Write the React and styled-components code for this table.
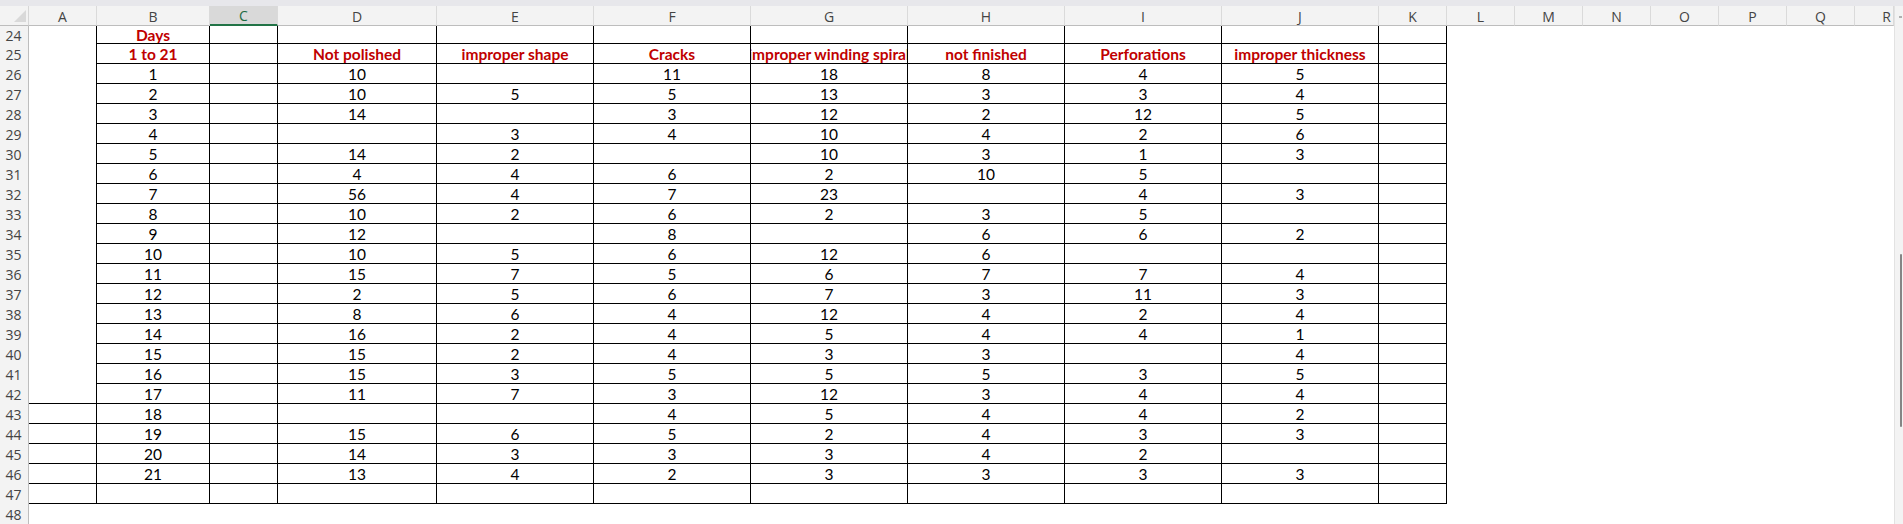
import React from "react";
import styled, { createGlobalStyle } from "styled-components";

const GlobalStyle = createGlobalStyle`
  html, body { margin: 0; padding: 0; background: #ffffff; }
  body { font-family: Lato, "Noto Sans", sans-serif; }
`;

const COLS = [
  { key: "A", w: 68 },
  { key: "B", w: 113 },
  { key: "C", w: 68 },
  { key: "D", w: 159 },
  { key: "E", w: 157 },
  { key: "F", w: 157 },
  { key: "G", w: 157 },
  { key: "H", w: 157 },
  { key: "I", w: 157 },
  { key: "J", w: 157 },
  { key: "K", w: 68 },
  { key: "L", w: 68 },
  { key: "M", w: 68 },
  { key: "N", w: 68 },
  { key: "O", w: 68 },
  { key: "P", w: 68 },
  { key: "Q", w: 68 },
  { key: "R", w: 39 },
];

const HEADERS = ["Not polished", "improper shape", "Cracks", "improper winding spiral", "not finished", "Perforations", "improper thickness"];

const DATA = [
  [10, "", 11, 18, 8, 4, 5],
  [10, 5, 5, 13, 3, 3, 4],
  [14, "", 3, 12, 2, 12, 5],
  ["", 3, 4, 10, 4, 2, 6],
  [14, 2, "", 10, 3, 1, 3],
  [4, 4, 6, 2, 10, 5, ""],
  [56, 4, 7, 23, "", 4, 3],
  [10, 2, 6, 2, 3, 5, ""],
  [12, "", 8, "", 6, 6, 2],
  [10, 5, 6, 12, 6, "", ""],
  [15, 7, 5, 6, 7, 7, 4],
  [2, 5, 6, 7, 3, 11, 3],
  [8, 6, 4, 12, 4, 2, 4],
  [16, 2, 4, 5, 4, 4, 1],
  [15, 2, 4, 3, 3, "", 4],
  [15, 3, 5, 5, 5, 3, 5],
  [11, 7, 3, 12, 3, 4, 4],
  ["", "", 4, 5, 4, 4, 2],
  [15, 6, 5, 2, 4, 3, 3],
  [14, 3, 3, 3, 4, 2, ""],
  [13, 4, 2, 3, 3, 3, 3],
];

const Page = styled.div`
  width: 1903px;
  height: 524px;
  display: flex;
  flex-direction: column;
  overflow: hidden;
  background: #ffffff;
`;

const TopStrip = styled.div`
  height: 6px;
  flex: none;
  background: #e7e7eb;
`;

const Body = styled.div`
  flex: 1;
  display: flex;
  min-height: 0;
`;

const Sheet = styled.div`
  width: 1894px;
  display: grid;
  grid-template-columns: 29px ${COLS.map((c) => c.w + "px").join(" ")};
  grid-template-rows: 20px 18px repeat(23, 20px) 20px;
  overflow: hidden;
`;

const Corner = styled.div`
  background: #f3f3f3;
  border-right: 1px solid #d6d6d6;
  border-bottom: 1px solid #bdbdbd;
  box-sizing: border-box;
  display: flex;
  align-items: flex-end;
  justify-content: flex-end;
  padding: 0 2px 3px 0;
`;

const ColHeader = styled.div`
  box-sizing: border-box;
  background: ${(p) => (p.$active ? "#d9d9d9" : "#f3f3f3")};
  border-right: 1px solid #dadada;
  border-bottom: ${(p) => (p.$active ? "2px solid #217346" : "1px solid #bdbdbd")};
  color: ${(p) => (p.$active ? "#1d6b43" : "#444444")};
  font-family: "Open Sans", "Noto Sans", sans-serif;
  font-size: 14px;
  display: flex;
  align-items: center;
  justify-content: ${(p) => (p.$end ? "flex-end" : "center")};
  padding-right: ${(p) => (p.$end ? "2px" : "0")};
  padding-top: 1px;
  overflow: hidden;
`;

const RowHeader = styled.div`
  box-sizing: border-box;
  background: #f3f3f3;
  border-right: 1px solid #bdbdbd;
  color: #444444;
  font-family: "Open Sans", "Noto Sans", sans-serif;
  font-size: 14px;
  display: flex;
  align-items: center;
  justify-content: center;
  padding-right: 1px;
`;

const Cell = styled.div`
  box-sizing: border-box;
  border-right: ${(p) => (p.$right ? "1px solid #000000" : "none")};
  border-bottom: ${(p) => (p.$bottom ? "1px solid #000000" : "none")};
  display: flex;
  align-items: center;
  justify-content: center;
  overflow: hidden;
  white-space: nowrap;
  font-family: Lato, "Noto Sans", sans-serif;
  font-size: 15.5px;
  font-weight: ${(p) => (p.$head ? 700 : 400)};
  color: ${(p) => (p.$head ? "#c00000" : "#000000")};
  padding-top: 1px;
`;

const CellText = styled.span`
  flex: none;
`;

const Scrollbar = styled.div`
  width: 9px;
  flex: none;
  box-sizing: border-box;
  background: #f3f3f3;
  border-left: 1px solid #e2e2e2;
  display: flex;
  flex-direction: column;
  align-items: flex-end;
  padding-right: 1px;
`;

const ScrollArrow = styled.div`
  margin-top: 10px;
  width: 3px;
  height: 2px;
  background: #b0b0b0;
`;

const Thumb = styled.div`
  margin-top: 236px;
  width: 2px;
  height: 173px;
  border-radius: 1px;
  background: #858585;
`;

function CornerMark() {
  return (
    <svg width="12" height="12" viewBox="0 0 12 12">
      <polygon points="12,0 12,12 0,12" fill="#d9d9d9" />
    </svg>
  );
}

function cellContent(rowNum, colKey) {
  if (rowNum === 24 && colKey === "B") return { text: "Days", head: true };
  if (rowNum === 25) {
    if (colKey === "B") return { text: "1 to 21", head: true };
    const idx = "DEFGHIJ".indexOf(colKey);
    if (idx >= 0) return { text: HEADERS[idx], head: true };
  }
  if (rowNum >= 26 && rowNum <= 46) {
    const day = rowNum - 25;
    if (colKey === "B") return { text: String(day), head: false };
    const idx = "DEFGHIJ".indexOf(colKey);
    if (idx >= 0) return { text: String(DATA[day - 1][idx]), head: false };
  }
  return { text: "", head: false };
}

function borders(rowNum, colKey) {
  if (rowNum < 24 || rowNum > 47) return { right: false, bottom: false };
  if (colKey === "A") return { right: true, bottom: rowNum >= 42 };
  if ("BCDEFGHIJK".includes(colKey)) return { right: true, bottom: true };
  return { right: false, bottom: false };
}

export default function App() {
  const rows = [];
  for (let r = 24; r <= 48; r++) rows.push(r);

  return (
    <Page>
      <GlobalStyle />
      <TopStrip />
      <Body>
        <Sheet>
          <Corner>
            <CornerMark />
          </Corner>
          {COLS.map((c) => (
            <ColHeader key={c.key} $active={c.key === "C"} $end={c.key === "R"}>
              {c.key}
            </ColHeader>
          ))}
          {rows.map((r) => (
            <React.Fragment key={r}>
              <RowHeader>{r}</RowHeader>
              {COLS.map((c) => {
                const { text, head } = cellContent(r, c.key);
                const b = borders(r, c.key);
                return (
                  <Cell key={c.key} $right={b.right} $bottom={b.bottom} $head={head}>
                    {text && <CellText>{text}</CellText>}
                  </Cell>
                );
              })}
            </React.Fragment>
          ))}
        </Sheet>
        <Scrollbar>
          <ScrollArrow />
          <Thumb />
        </Scrollbar>
      </Body>
    </Page>
  );
}
